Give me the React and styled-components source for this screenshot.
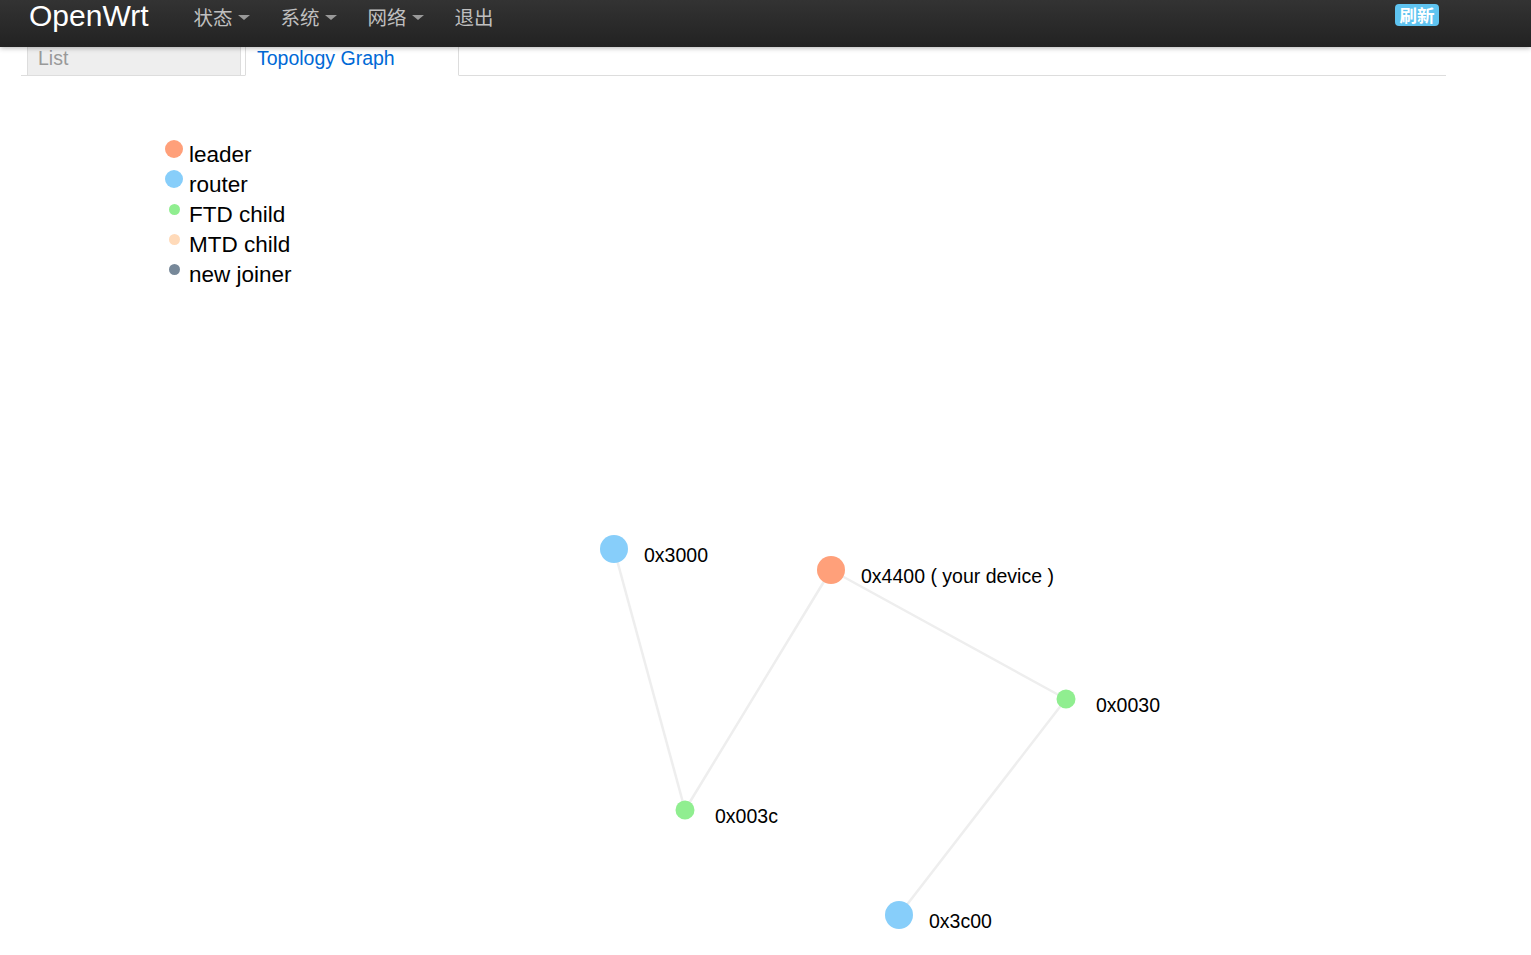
import React from "react";
import styled, { createGlobalStyle } from "styled-components";

const GlobalStyle = createGlobalStyle`
	html, body {
		margin: 0;
		padding: 0;
		background: #fff;
		overflow: hidden;
	}
	body {
		font-family: "Liberation Sans", Arial, "Noto Sans CJK SC", sans-serif;
		color: #000;
	}
`;

const TopBar = styled.header`
	position: relative;
	z-index: 2;
	height: 47px;
	display: flex;
	align-items: flex-start;
	padding: 0 92px 0 29px;
	background-image: linear-gradient(to bottom, #333333, #222222);
	box-shadow: 0 1px 5px rgba(0, 0, 0, 0.3);
`;

const Brand = styled.a`
	margin-top: 1px;
	font-size: 30px;
	line-height: 30px;
	color: #fff;
	text-decoration: none;
`;

const Nav = styled.ul`
	display: flex;
	list-style: none;
	margin: 0 0 0 29.5px;
	padding: 0;
`;

const NavItem = styled.li`
	display: flex;
	align-items: center;
	height: 33px;
	padding: 0 15.5px;
	font-family: "Noto Sans CJK SC", sans-serif;
	font-size: 19.5px;
	color: #bfbfbf;
`;

const Caret = styled.span`
	width: 0;
	height: 0;
	margin-left: 5px;
	margin-top: 2px;
	border-left: 6px solid transparent;
	border-right: 6px solid transparent;
	border-top: 5px solid #999;
`;

const RefreshButton = styled.button`
	margin: 3.5px 0 0 auto;
	width: 44px;
	height: 22.5px;
	padding: 0;
	border: none;
	border-radius: 4px;
	background: #5ec3f0;
	color: #fff;
	font-family: "Noto Sans CJK SC", sans-serif;
	font-weight: bold;
	font-size: 17.5px;
	line-height: 22px;
	cursor: pointer;
`;

const Tabs = styled.ul`
	display: flex;
	list-style: none;
	width: 1425px;
	margin: 0 0 0 21px;
	padding: 0 0 0 6px;
	box-sizing: border-box;
	border-bottom: 1px solid #ddd;
`;

const Tab = styled.li`
	width: 214px;
	box-sizing: border-box;
	margin: 0 4px -1px 0;
	padding: 0 10px 6px;
	font-size: 19.5px;
	line-height: 22px;
	border: 1px solid #ddd;
	border-top: none;
	border-bottom: 1px solid ${({ $active }) => ($active ? "#fff" : "#ddd")};
	background: ${({ $active }) => ($active ? "#fff" : "#eee")};
	color: ${({ $active }) => ($active ? "#0069d6" : "#999")};
	padding-left: ${({ $active }) => ($active ? "11px" : "10px")};
`;

const Legend = styled.ul`
	list-style: none;
	margin: 63.5px 0 0 165px;
	padding: 0;
`;

const LegendRow = styled.li`
	display: flex;
	align-items: flex-start;
	height: 30px;
	font-size: 22.5px;
	line-height: 30px;
`;

const DotCell = styled.span`
	display: flex;
	justify-content: center;
	width: 18px;
	margin-right: 6px;
`;

const Dot = styled.span`
	display: block;
	width: ${({ $r }) => $r * 2}px;
	height: ${({ $r }) => $r * 2}px;
	margin-top: ${({ $r }) => 9.5 - $r}px;
	border-radius: 50%;
	background: ${({ $color }) => $color};
`;

const GraphSvg = styled.svg`
	display: block;
	margin-top: 10px;
	width: 1531px;
	height: 655px;
`;

const NodeLabel = styled.text`
	font-family: "Liberation Sans", Arial, sans-serif;
	font-size: 19.5px;
	fill: #000;
`;

const COLORS = {
	leader: "#FFA07A",
	router: "#87CEFA",
	ftd: "#90EE90",
	mtd: "#FFDAB9",
	joiner: "#778899",
};

const legend = [
	{ label: "leader", color: COLORS.leader, r: 9 },
	{ label: "router", color: COLORS.router, r: 9 },
	{ label: "FTD child", color: COLORS.ftd, r: 5.5 },
	{ label: "MTD child", color: COLORS.mtd, r: 5.5 },
	{ label: "new joiner", color: COLORS.joiner, r: 5.5 },
];

const nodes = {
	n3000: { x: 614, y: 249, r: 14, color: COLORS.router, label: "0x3000" },
	n4400: { x: 831, y: 270, r: 14, color: COLORS.leader, label: "0x4400 ( your device )" },
	n0030: { x: 1066, y: 399, r: 9.5, color: COLORS.ftd, label: "0x0030" },
	n003c: { x: 685, y: 510, r: 9.5, color: COLORS.ftd, label: "0x003c" },
	n3c00: { x: 899, y: 615, r: 14, color: COLORS.router, label: "0x3c00" },
};

const links = [
	["n3000", "n003c"],
	["n4400", "n003c"],
	["n4400", "n0030"],
	["n0030", "n3c00"],
];

const menu = [
	{ label: "状态", caret: true },
	{ label: "系统", caret: true },
	{ label: "网络", caret: true },
	{ label: "退出", caret: false },
];

export default function App() {
	return (
		<>
			<GlobalStyle />
			<TopBar>
				<Brand href="#">OpenWrt</Brand>
				<Nav>
					{menu.map((m) => (
						<NavItem key={m.label}>
							{m.label}
							{m.caret && <Caret />}
						</NavItem>
					))}
				</Nav>
				<RefreshButton>刷新</RefreshButton>
			</TopBar>

			<Tabs>
				<Tab>List</Tab>
				<Tab $active>Topology Graph</Tab>
			</Tabs>

			<Legend>
				{legend.map((item) => (
					<LegendRow key={item.label}>
						<DotCell>
							<Dot $r={item.r} $color={item.color} />
						</DotCell>
						{item.label}
					</LegendRow>
				))}
			</Legend>

			<GraphSvg viewBox="0 0 1531 655">
				{links.map(([a, b]) => (
					<line
						key={a + b}
						x1={nodes[a].x}
						y1={nodes[a].y}
						x2={nodes[b].x}
						y2={nodes[b].y}
						stroke="#eee"
						strokeWidth="2.5"
					/>
				))}
				{Object.entries(nodes).map(([id, n]) => (
					<g key={id}>
						<circle cx={n.x} cy={n.y} r={n.r} fill={n.color} />
						<NodeLabel x={n.x + 30} y={n.y + 12.5}>
							{n.label}
						</NodeLabel>
					</g>
				))}
			</GraphSvg>
		</>
	);
}
